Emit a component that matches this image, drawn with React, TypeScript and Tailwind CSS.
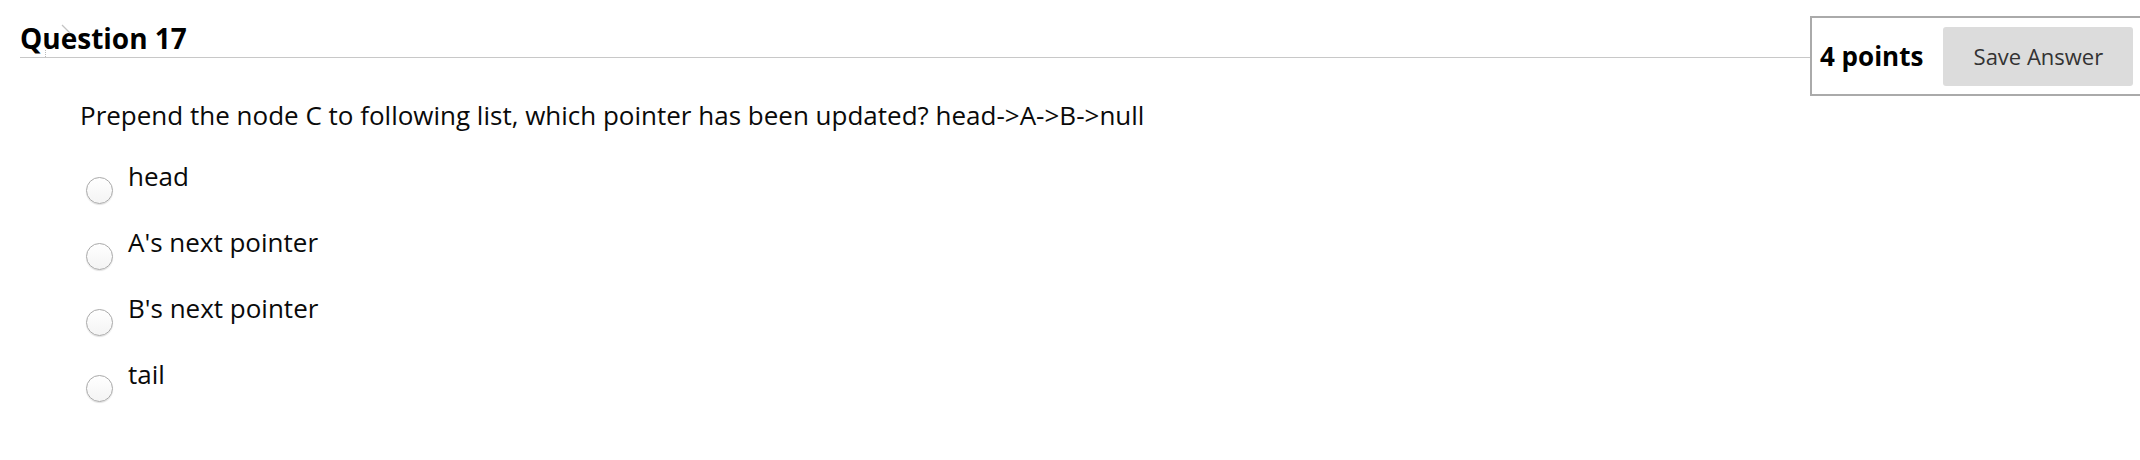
import React from "react";

const options = ["head", "A's next pointer", "B's next pointer", "tail"];

export default function App() {
  return (
    <div className="relative w-[2140px] h-[460px] overflow-hidden bg-white text-[#0a0a0a] font-['Open_Sans',sans-serif]">
      <div className="flex pl-5 pt-4">
        <div className="flex-1 h-[42px] pt-2 border-b border-[#c8c8c8]">
          <h2 className="text-[28px] font-bold leading-none text-black">Question 17</h2>
        </div>
        <div className="w-[330px] h-[80px] border-2 border-r-0 border-[#aaaaaa] flex items-center pl-2 gap-5">
          <span className="text-[26px] font-bold text-black leading-none">4 points</span>
          <button className="w-[190px] h-[59px] rounded-[3px] bg-[#dcdcdc] text-[#333] text-[22px] leading-none">
            Save Answer
          </button>
        </div>
      </div>
      <p className="mt-px pl-[80px] text-[26px] leading-[36px]">
        Prepend the node C to following list, which pointer has been updated? head-&gt;A-&gt;B-&gt;null
      </p>
      <div className="mt-[25px] pl-[86px] flex flex-col gap-[20px]">
        {options.map((o) => (
          <label key={o} className="flex items-start gap-[15px]">
            <span className="mt-[19px] w-[27px] h-[27px] shrink-0 rounded-full border border-[#a9a9a9] bg-gradient-to-b from-white to-[#f4f4f4] shadow-[0_1px_1px_rgba(0,0,0,0.12)]" />
            <span className="text-[26px] leading-[36px]">{o}</span>
          </label>
        ))}
      </div>
      <svg className="absolute left-0 top-0 pointer-events-none" width="100" height="70">
        <line x1="62" y1="25" x2="70" y2="33" stroke="#c4c4c4" strokeWidth="1.2" />
        <line x1="45.5" y1="50" x2="45.5" y2="58" stroke="#bbb" strokeWidth="1" strokeDasharray="1 1" />
      </svg>
    </div>
  );
}
